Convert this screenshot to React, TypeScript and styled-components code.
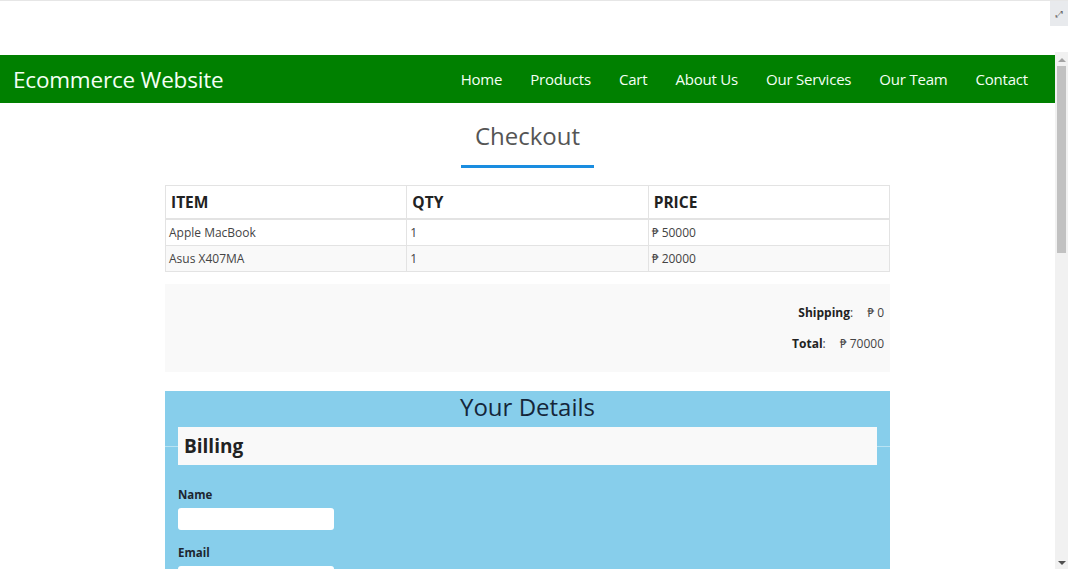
import styled, { createGlobalStyle } from 'styled-components';

const GlobalStyle = createGlobalStyle`
  html, body {
    margin: 0;
    padding: 0;
    height: 100%;
    overflow: hidden;
    background: #fff;
  }
  body {
    font-family: "Open Sans", "Noto Sans", sans-serif;
    color: #333;
  }
  #root {
    height: 100%;
  }
`;

const Frame = styled.div`
  height: 100vh;
  display: flex;
  flex-direction: column;
`;

const TopStrip = styled.div`
  height: 55px;
  flex-shrink: 0;
  display: flex;
  justify-content: flex-end;
  border-top: 1px solid #e6e6e6;
  box-sizing: border-box;
  background: #fff;
`;

const CornerTab = styled.div`
  width: 18px;
  height: 25px;
  background: #e8eaed;
  color: #666;
  font-size: 9px;
  line-height: 25px;
  text-align: center;
`;

const Body = styled.div`
  flex: 1;
  display: flex;
  min-height: 0;
`;

const Page = styled.div`
  flex: 1;
  overflow: hidden;
`;

const Scrollbar = styled.div`
  width: 13px;
  flex-shrink: 0;
  margin-top: -3px;
  background: #f1f1f1;
  display: flex;
  flex-direction: column;
  align-items: center;
`;

const ScrollArrow = styled.div<{ $down?: boolean }>`
  width: 0;
  height: 0;
  margin: 6px 0 4px;
  border-left: 4px solid transparent;
  border-right: 4px solid transparent;
  ${(p) => (p.$down ? 'border-top: 4px solid #505050;' : 'border-bottom: 4px solid #a3a3a3;')}
`;

const ScrollThumb = styled.div`
  width: 9px;
  height: 187px;
  background: #c1c1c1;
`;

const ScrollGap = styled.div`
  flex: 1;
`;

const Navbar = styled.nav`
  height: 48px;
  background: #008000;
  display: flex;
  align-items: center;
  justify-content: space-between;
  padding: 0 13px;
`;

const Brand = styled.div`
  color: #f4fff4;
  font-size: 22.5px;
  letter-spacing: -0.2px;
`;

const NavList = styled.ul`
  list-style: none;
  margin: 0;
  padding: 0;
  display: flex;
`;

const NavLink = styled.li`
  color: #f4fff4;
  font-size: 15px;
  padding: 0 14px;
  letter-spacing: -0.2px;
`;

const Heading = styled.h2`
  margin: 18px auto 0;
  text-align: center;
  font-size: 24px;
  font-weight: 400;
  color: #555;
  line-height: 30px;
`;

const HeadingBar = styled.div`
  width: 133px;
  height: 3px;
  background: #1a8de0;
  margin: 14px auto 17px;
`;

const Container = styled.div`
  width: 725px;
  margin: 0 auto;
`;

const Table = styled.table`
  width: 100%;
  border-collapse: collapse;
  table-layout: fixed;
`;

const Th = styled.th`
  text-align: left;
  font-size: 15.5px;
  font-weight: 700;
  color: #222;
  height: 32px;
  padding: 0 5px;
  border: 1px solid #e3e3e3;
  border-bottom-width: 2px;
`;

const Td = styled.td<{ $alt?: boolean }>`
  font-size: 12px;
  color: #444;
  height: 25px;
  padding: 0 3px;
  border: 1px solid #e3e3e3;
  background: ${(p) => (p.$alt ? '#f9f9f9' : '#fff')};
`;

const Summary = styled.div`
  margin-top: 12px;
  height: 88px;
  background: #f9f9f9;
  display: flex;
  flex-direction: column;
  align-items: flex-end;
  justify-content: center;
  gap: 12px;
  padding-right: 6px;
  font-size: 12px;
  color: #444;
`;

const SummaryRow = styled.div`
  display: flex;
  gap: 14px;
  line-height: 19px;
`;

const SummaryLabel = styled.span`
  b {
    font-weight: 700;
    color: #222;
  }
`;

const Details = styled.section`
  margin-top: 19px;
  background: #87ceeb;
  padding-bottom: 30px;
`;

const DetailsTitle = styled.h2`
  margin: 0 0 4px;
  text-align: center;
  font-size: 24px;
  font-weight: 400;
  color: #15263a;
  line-height: 32px;
`;

const BillingRow = styled.div`
  padding: 0 13px;
  background: linear-gradient(
    to bottom,
    transparent 19px,
    #b9e3f3 19px,
    #b9e3f3 20px,
    transparent 20px
  );
`;

const BillingBox = styled.div`
  height: 38px;
  background: #f9f9f9;
  display: flex;
  align-items: center;
  padding-left: 6px;
  font-size: 19px;
  font-weight: 700;
  color: #222;
`;

const Form = styled.div`
  padding: 22px 13px 0;
  display: flex;
  flex-direction: column;
`;

const Label = styled.label`
  font-size: 11.5px;
  font-weight: 700;
  color: #1d2630;
  line-height: 16px;
  margin-bottom: 5px;
`;

const Input = styled.input`
  width: 156px;
  height: 22px;
  box-sizing: border-box;
  border: none;
  border-radius: 3px;
  background: #fff;
  margin-bottom: 15px;
`;

const items = [
  { name: 'Apple MacBook', qty: 1, price: 50000 },
  { name: 'Asus X407MA', qty: 1, price: 20000 },
];

const navItems = ['Home', 'Products', 'Cart', 'About Us', 'Our Services', 'Our Team', 'Contact'];

export default function App() {
  const total = items.reduce((sum, it) => sum + it.price * it.qty, 0);

  return (
    <>
      <GlobalStyle />
      <Frame>
        <TopStrip>
          <CornerTab>⤢</CornerTab>
        </TopStrip>
        <Body>
          <Page>
            <Navbar>
              <Brand>Ecommerce Website</Brand>
              <NavList>
                {navItems.map((n) => (
                  <NavLink key={n}>{n}</NavLink>
                ))}
              </NavList>
            </Navbar>

            <Heading>Checkout</Heading>
            <HeadingBar />

            <Container>
              <Table>
                <thead>
                  <tr>
                    <Th>ITEM</Th>
                    <Th>QTY</Th>
                    <Th>PRICE</Th>
                  </tr>
                </thead>
                <tbody>
                  {items.map((it, i) => (
                    <tr key={it.name}>
                      <Td $alt={i % 2 === 1}>{it.name}</Td>
                      <Td $alt={i % 2 === 1}>{it.qty}</Td>
                      <Td $alt={i % 2 === 1}>₱ {it.price}</Td>
                    </tr>
                  ))}
                </tbody>
              </Table>

              <Summary>
                <SummaryRow>
                  <SummaryLabel>
                    <b>Shipping</b>:
                  </SummaryLabel>
                  <span>₱ 0</span>
                </SummaryRow>
                <SummaryRow>
                  <SummaryLabel>
                    <b>Total</b>:
                  </SummaryLabel>
                  <span>₱ {total}</span>
                </SummaryRow>
              </Summary>

              <Details>
                <DetailsTitle>Your Details</DetailsTitle>
                <BillingRow>
                  <BillingBox>Billing</BillingBox>
                </BillingRow>
                <Form>
                  <Label>Name</Label>
                  <Input type="text" />
                  <Label>Email</Label>
                  <Input type="email" />
                </Form>
              </Details>
            </Container>
          </Page>
          <Scrollbar>
            <ScrollArrow />
            <ScrollThumb />
            <ScrollGap />
            <ScrollArrow $down />
          </Scrollbar>
        </Body>
      </Frame>
    </>
  );
}
